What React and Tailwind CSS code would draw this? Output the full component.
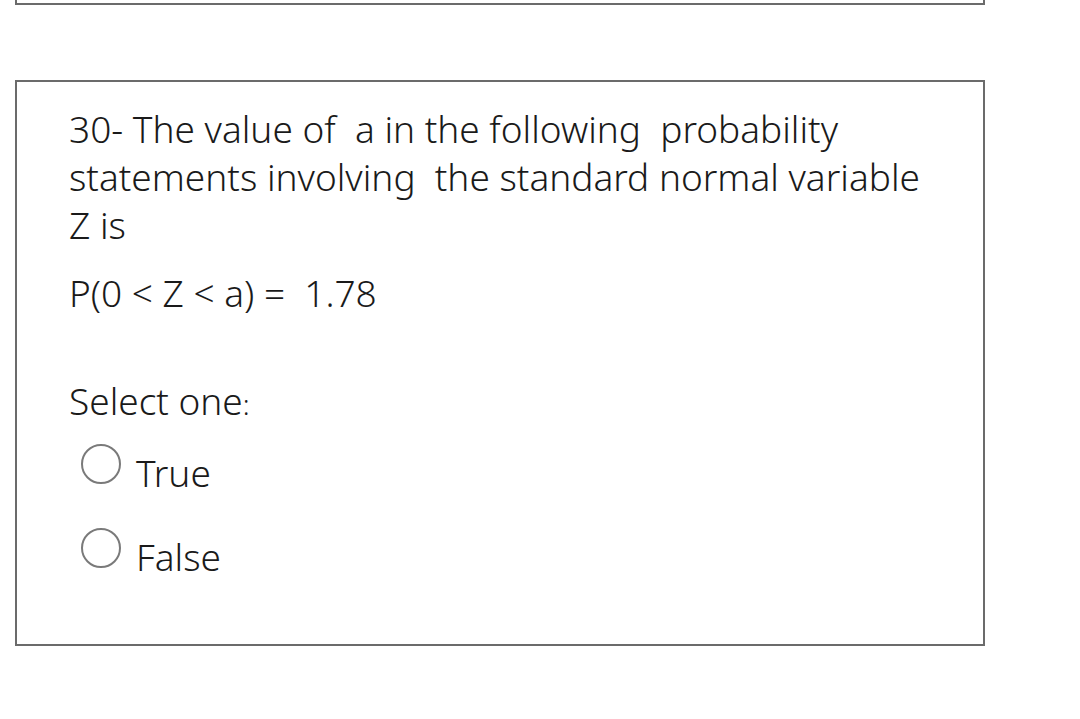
export default function App() {
  return (
    <div className="min-h-[719px] bg-white pl-[15px] text-[#1a1a1a]" style={{ fontFamily: '"Noto Sans", "Open Sans", sans-serif' }}>
      <div className="h-[5px] w-[970px] border-x-2 border-b-2 border-[#6b6b6b]" />
      <div className="mt-[75px] h-[566px] w-[970px] border-2 border-[#6b6b6b] pl-[52px] pt-[23px] font-[350]">
        <div className="text-[37px] leading-[48px]">
          <div>30- The value of&nbsp; a in the following&nbsp; probability</div>
          <div>statements involving&nbsp; the standard normal variable</div>
          <div>Z is</div>
        </div>
        <div className="mt-[20px] text-[37px] leading-[48px]">P(0 &lt; Z &lt; a) =&nbsp; 1.78</div>
        <div className="mt-[60px] text-[37px] leading-[48px]">
          Select one<span className="text-[28px]">:</span>
        </div>
        <div className="mt-[16px] flex flex-col gap-[44px] pl-[12px]">
          {["True", "False"].map((label) => (
            <label key={label} className="flex items-center gap-[15px] text-[37px] leading-[40px]">
              <span className="h-[40px] w-[40px] shrink-0 rounded-full border-2 border-[#7a7a7a]" />
              <span className="translate-y-[9px]">{label}</span>
            </label>
          ))}
        </div>
      </div>
    </div>
  );
}
